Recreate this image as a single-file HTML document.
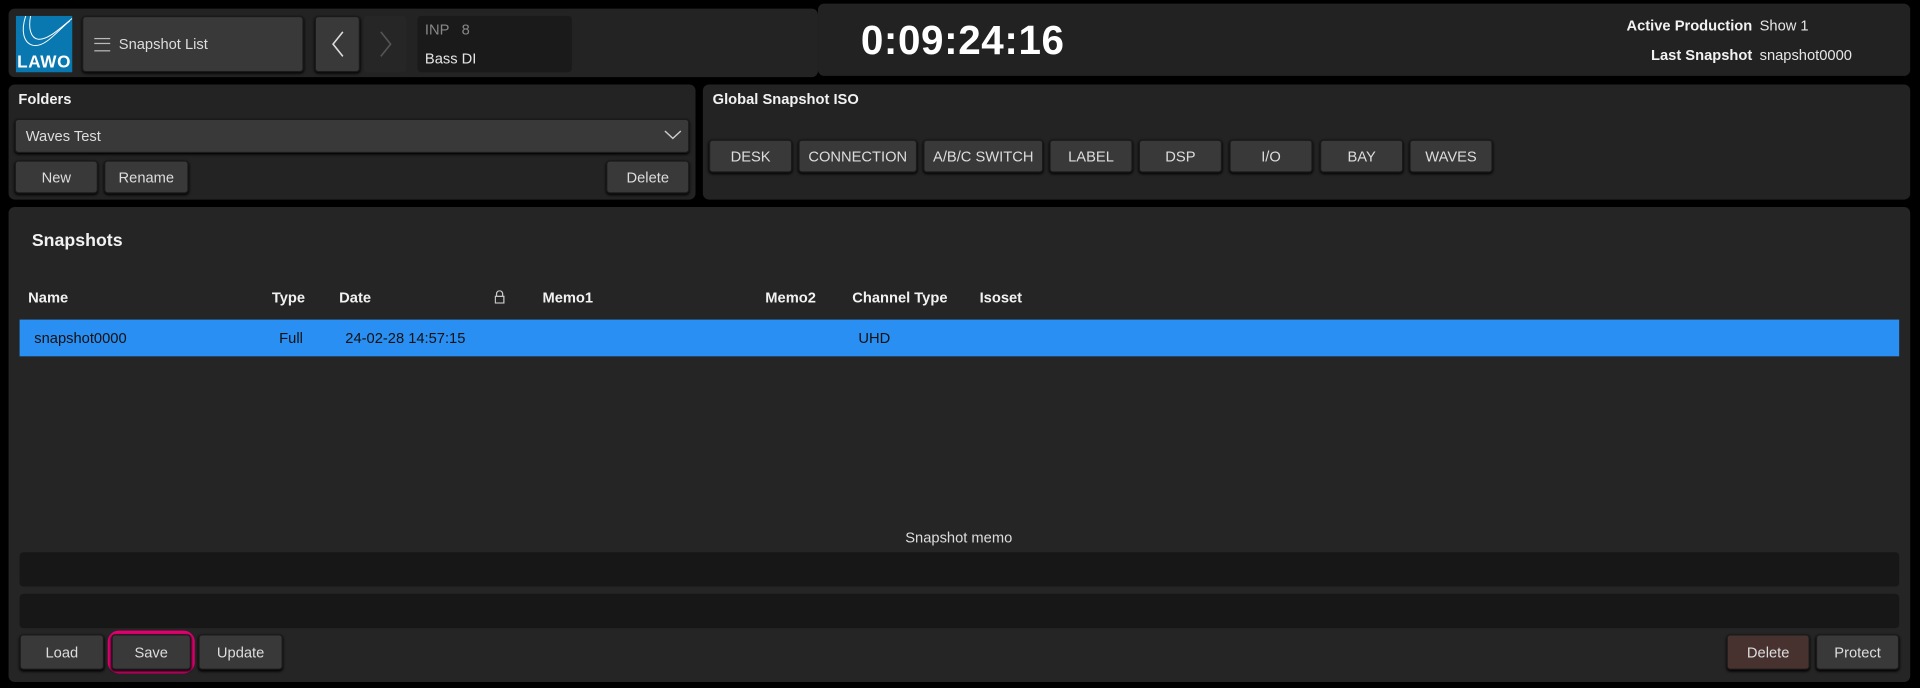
<!DOCTYPE html>
<html><head><meta charset="utf-8"><style>
html,body{margin:0;padding:0;background:#000;width:1920px;height:688px;overflow:hidden}
#w{position:absolute;left:0;top:0;width:1568px;height:562px;transform:scale(1.22449);transform-origin:0 0;font-family:"Liberation Sans",sans-serif;color:#e6e6e6;font-size:12px}
.a{position:absolute;box-sizing:border-box}
.p{background:#232323;border-radius:5px}
.b{background:#393939;border-radius:3px;border:1px solid #1a1a1a;box-shadow:0 1px 2px #000;display:flex;align-items:center;justify-content:center;color:#ddd}
.h{font-weight:bold;color:#f2f2f2}
</style></head><body><div id="w">
<div class="a p" style="left:7px;top:7px;width:661px;height:56px"></div>
<div class="a p" style="left:668px;top:3px;width:892px;height:59px;background:#222"></div>
<div class="a" style="left:13px;top:13px;width:46px;height:46px;background:#0a78b0;overflow:hidden">
<svg width="46" height="46" viewBox="0 0 46 46" style="position:absolute;left:0;top:0"><path d="M8 0 C4 12 6 22 14 24 C24 26 34 12 44 4" stroke="#fff" stroke-width="0.8" fill="none"/><path d="M12 0 C10 10 12 18 18 19 C26 20 36 10 46 2" stroke="#fff" stroke-width="0.8" fill="none"/></svg>
<div class="a" style="left:1px;top:29px;font-weight:bold;font-size:14px;color:#fff;letter-spacing:0.5px">LAWO</div></div>
<div class="a b" style="left:67px;top:13px;width:181px;height:46px;justify-content:flex-start;padding-left:9px"><span style="display:inline-block;width:13px;height:9px;border-top:1.5px solid #bbb;border-bottom:1.5px solid #bbb;position:relative;margin-right:7px"><span style="position:absolute;left:0;top:3.5px;width:13px;border-top:1.5px solid #bbb"></span></span>Snapshot List</div>
<div class="a b" style="left:257px;top:13px;width:37px;height:46px"><svg width="12" height="22"><path d="M10 1 L2 11 L10 21" stroke="#ddd" stroke-width="1.3" fill="none"/></svg></div>
<div class="a" style="left:297px;top:13px;width:35px;height:46px;background:#262626;border-radius:3px;display:flex;align-items:center;justify-content:center"><svg width="12" height="22"><path d="M2 1 L10 11 L2 21" stroke="#555" stroke-width="1.3" fill="none"/></svg></div>
<div class="a" style="left:341px;top:13px;width:126px;height:46px;background:#1a1a1a;border-radius:3px"></div>
<div class="a" style="left:347px;top:17px;color:#888">INP&nbsp;&nbsp;&nbsp;8</div>
<div class="a" style="left:347px;top:41px">Bass DI</div>
<div class="a h" style="left:703px;top:14px;font-size:33px;color:#fff;letter-spacing:0.5px">0:09:24:16</div>
<div class="a h" style="left:1290px;top:14px;width:141px;text-align:right;font-size:12px">Active Production</div>
<div class="a" style="left:1437px;top:14px;font-size:12px">Show 1</div>
<div class="a h" style="left:1290px;top:38px;width:141px;text-align:right;font-size:12px">Last Snapshot</div>
<div class="a" style="left:1437px;top:38px;font-size:12px">snapshot0000</div>

<div class="a p" style="left:7px;top:69px;width:561px;height:94px"></div>
<div class="a h" style="left:15px;top:74px;font-size:12px">Folders</div>
<div class="a b" style="left:12px;top:97px;width:551px;height:28px;justify-content:flex-start;padding-left:8px">Waves Test</div>
<svg class="a" style="left:542px;top:105px" width="15" height="10"><path d="M1 2 L7.5 8 L14 2" stroke="#ccc" stroke-width="1.2" fill="none"/></svg>
<div class="a b" style="left:12px;top:131px;width:68px;height:27px">New</div>
<div class="a b" style="left:85px;top:131px;width:69px;height:27px">Rename</div>
<div class="a b" style="left:495px;top:131px;width:68px;height:27px">Delete</div>

<div class="a p" style="left:574px;top:69px;width:986px;height:94px"></div>
<div class="a h" style="left:582px;top:74px;font-size:12px">Global Snapshot ISO</div>
<div class="a b" style="left:579px;top:114px;width:68px;height:27px">DESK</div>
<div class="a b" style="left:652px;top:114px;width:97px;height:27px">CONNECTION</div>
<div class="a b" style="left:754px;top:114px;width:98px;height:27px">A/B/C SWITCH</div>
<div class="a b" style="left:857px;top:114px;width:68px;height:27px">LABEL</div>
<div class="a b" style="left:930px;top:114px;width:68px;height:27px">DSP</div>
<div class="a b" style="left:1004px;top:114px;width:68px;height:27px">I/O</div>
<div class="a b" style="left:1078px;top:114px;width:68px;height:27px">BAY</div>
<div class="a b" style="left:1151px;top:114px;width:68px;height:27px">WAVES</div>

<div class="a p" style="left:7px;top:169px;width:1553px;height:388px;background:#252525"></div>
<div class="a h" style="left:26px;top:189px;font-size:14.5px">Snapshots</div>
<div class="a h" style="left:23px;top:236px;font-size:12px">Name</div>
<div class="a h" style="left:222px;top:236px;font-size:12px">Type</div>
<div class="a h" style="left:277px;top:236px;font-size:12px">Date</div>
<svg class="a" style="left:404px;top:237px" width="8" height="11"><path d="M1.5 5 V3 A2.5 2.5 0 0 1 6.5 3 V5" stroke="#ccc" fill="none"/><rect x="0.5" y="5" width="7" height="5.5" stroke="#ccc" fill="none"/></svg>
<div class="a h" style="left:443px;top:236px;font-size:12px">Memo1</div>
<div class="a h" style="left:625px;top:236px;font-size:12px">Memo2</div>
<div class="a h" style="left:696px;top:236px;font-size:12px">Channel Type</div>
<div class="a h" style="left:800px;top:236px;font-size:12px">Isoset</div>
<div class="a" style="left:16px;top:261px;width:1535px;height:30px;background:#2a8ff2"></div>
<div class="a" style="left:28px;top:269px;color:#111">snapshot0000</div>
<div class="a" style="left:228px;top:269px;color:#111">Full</div>
<div class="a" style="left:282px;top:269px;color:#111">24-02-28 14:57:15</div>
<div class="a" style="left:701px;top:269px;color:#111">UHD</div>
<div class="a" style="left:683px;top:432px;width:200px;text-align:center;font-size:12px;color:#ddd">Snapshot memo</div>
<div class="a" style="left:16px;top:451px;width:1535px;height:28px;background:#171717;border-radius:3px"></div>
<div class="a" style="left:16px;top:485px;width:1535px;height:28px;background:#171717;border-radius:3px"></div>
<div class="a b" style="left:16px;top:518px;width:69px;height:29px">Load</div>
<div class="a" style="left:88px;top:515px;width:71px;height:35px;border:3px solid #e0006f;border-radius:9px"></div>
<div class="a b" style="left:91px;top:518px;width:65px;height:29px">Save</div>
<div class="a b" style="left:162px;top:518px;width:69px;height:29px">Update</div>
<div class="a b" style="left:1410px;top:518px;width:68px;height:29px;background:#48322f">Delete</div>
<div class="a b" style="left:1483px;top:518px;width:68px;height:29px">Protect</div>
</div></body></html>
